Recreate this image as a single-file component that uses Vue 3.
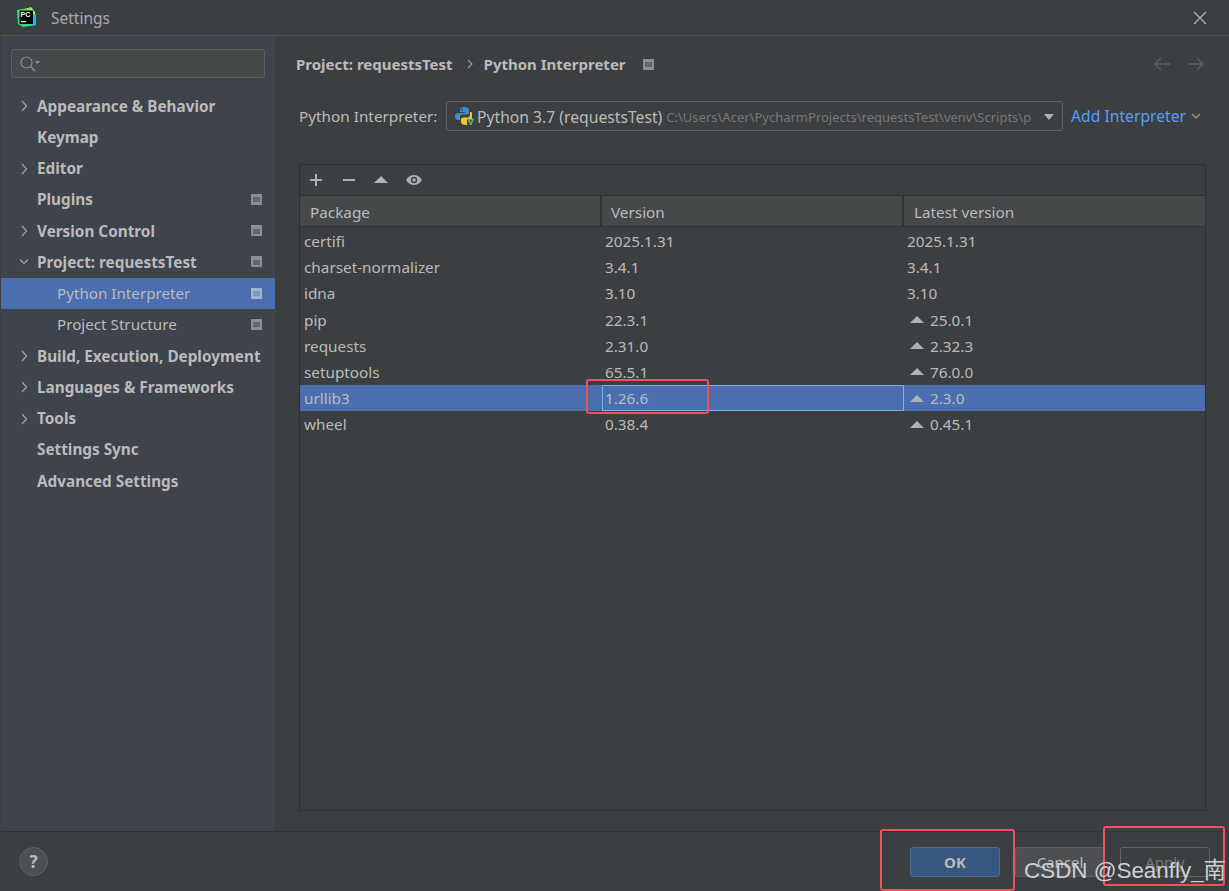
<template>
  <div class="dialog">
    <div class="titlebar">
      <svg class="logo" width="20" height="20" viewBox="0 0 20 20">
        <defs>
          <linearGradient id="pcEdge" x1="0" y1="1" x2="1" y2="0">
            <stop offset="0" stop-color="#21d789" />
            <stop offset="0.6" stop-color="#3bea62" />
            <stop offset="1" stop-color="#fcf84a" />
          </linearGradient>
        </defs>
        <path d="M1 3 12 1 15 0 19 5 20 18 7 20 2 17Z" fill="url(#pcEdge)" />
        <path d="M16 8 20 7 20 18 15 19Z" fill="#07c3f2" />
        <rect x="3.500" y="3.500" width="13.500" height="13.500" fill="#000" />
        <text x="4.500" y="9.800" class="logo-text">PC</text>
        <rect x="5" y="14" width="5" height="1.200" fill="#fff" />
      </svg>
      <span class="title">Settings</span>
      <svg class="close" width="14" height="14" viewBox="0 0 14 14">
        <path d="M1 1 13 13M13 1 1 13" stroke="#b4b4b4" stroke-width="1.2" fill="none" />
      </svg>
    </div>

    <div class="body">
      <div class="sidebar">
        <div class="search">
          <svg width="22" height="18" viewBox="0 0 22 18">
            <circle cx="7.500" cy="7.500" r="5.500" fill="none" stroke="#8f9295" stroke-width="1.2" />
            <path d="M11.500 11.500 16 16" stroke="#8f9295" stroke-width="1.4" />
            <path d="M16 6h5l-2.500 3Z" fill="#8f9295" />
          </svg>
        </div>
        <ul class="tree">
          <li
            v-for="item in tree"
            :key="item.label"
            class="tree-row"
            :class="{ selected: item.selected, child: item.child }"
          >
            <svg v-if="item.arrow" class="arrow" width="10" height="12" viewBox="0 0 10 12">
              <path
                :d="item.arrow === 'down' ? 'M1 3.5 5 7.5 9 3.5' : 'M3 1 7.5 6 3 11'"
                fill="none"
                stroke="#a0a3a5"
                stroke-width="1.3"
              />
            </svg>
            <span class="tree-label">{{ item.label }}</span>
            <span v-if="item.badge" class="badge"></span>
          </li>
        </ul>
      </div>

      <div class="content">
        <div class="crumbs">
          <span>Project: requestsTest</span>
          <svg width="8" height="10" viewBox="0 0 8 10">
            <path d="M2 1 6 5 2 9" fill="none" stroke="#a0a3a5" stroke-width="1.1" />
          </svg>
          <span>Python Interpreter</span>
          <span class="badge"></span>
          <div class="nav-arrows">
            <svg width="18" height="14" viewBox="0 0 18 14">
              <path d="M17 7H2M8 1 2 7l6 6" fill="none" stroke="#55585a" stroke-width="2" />
            </svg>
            <svg width="18" height="14" viewBox="0 0 18 14">
              <path d="M1 7h15M10 1l6 6-6 6" fill="none" stroke="#55585a" stroke-width="2" />
            </svg>
          </div>
        </div>

        <div class="interpreter">
          <span class="interp-label">Python Interpreter:</span>
          <div class="combo">
            <svg class="py" width="20" height="20" viewBox="0 0 20 20">
              <path d="M9 1C6 1 5 2 5 4v2h5v1H3C1 7 0 8.500 0 10.500S1 14 3 14h2v-3c0-1.500 1-2.500 3-2.500h4c1.500 0 2-1 2-2V4c0-2-2-3-5-3Z" fill="#3d8fc4" />
              <circle cx="7" cy="3.500" r="0.900" fill="#3c3f41" />
              <path d="M15 6v3c0 1.500-1 2.500-3 2.500H8c-1.500 0-2 1-2 2V16c0 2 2 3 5 3h1v-5.500h5V7c0-.6-.5-1-2-1Z" fill="#f0c52e" />
              <path d="M12.500 12.500h1.800l1.500 4.200 1.500-4.200h1.800L16.600 19h-1.700Z" fill="#62b543" />
            </svg>
            <span class="combo-name">Python 3.7 (requestsTest)</span>
            <span class="combo-path">C:\Users\Acer\PycharmProjects\requestsTest\venv\Scripts\p</span>
            <span class="combo-caret"></span>
          </div>
          <span class="add-link">Add Interpreter</span>
          <svg width="10" height="7" viewBox="0 0 10 7">
            <path d="M1 1 5 5 9 1" fill="none" stroke="#8f9295" stroke-width="1.5" />
          </svg>
        </div>

        <div class="table">
          <div class="toolbar">
            <svg width="14" height="14" viewBox="0 0 14 14">
              <path d="M7 1v12M1 7h12" stroke="#afb1b3" stroke-width="2" />
            </svg>
            <svg width="14" height="14" viewBox="0 0 14 14">
              <path d="M1 7h12" stroke="#afb1b3" stroke-width="2" />
            </svg>
            <svg width="14" height="14" viewBox="0 0 14 14">
              <path d="M7 3 14 10H0Z" fill="#afb1b3" />
            </svg>
            <svg class="eye" width="18" height="14" viewBox="0 0 18 14">
              <path d="M1 7c2-3.500 5-5 8-5s6 1.500 8 5c-2 3.500-5 5-8 5S3 10.500 1 7Z" fill="#afb1b3" />
              <circle cx="9" cy="7" r="3.200" fill="#3c3f41" />
              <circle cx="9" cy="7" r="1.700" fill="#afb1b3" />
            </svg>
          </div>
          <div class="thead">
            <span>Package</span>
            <span>Version</span>
            <span>Latest version</span>
          </div>
          <div
            v-for="pkg in packages"
            :key="pkg.name"
            class="trow"
            :class="{ selected: pkg.name === 'urllib3' }"
          >
            <span class="cell">{{ pkg.name }}</span>
            <span class="cell version">{{ pkg.version }}</span>
            <span class="cell latest">
              <i v-if="pkg.upgrade" class="up"></i>{{ pkg.latest }}
            </span>
          </div>
        </div>
      </div>
    </div>

    <div class="footer">
      <div class="help">?</div>
      <div class="buttons">
        <button class="btn primary">OK</button>
        <button class="btn cancel">Cancel</button>
        <button class="btn disabled">Apply</button>
      </div>
    </div>

    <!-- annotations drawn over the screenshot -->
    <div class="mark mark-version"></div>
    <div class="mark mark-ok"></div>
    <div class="mark mark-apply"></div>
    <div class="watermark">CSDN @Seanfly_南</div>
  </div>
</template>

<script setup>
const tree = [
  { label: "Appearance & Behavior", arrow: "right" },
  { label: "Keymap" },
  { label: "Editor", arrow: "right" },
  { label: "Plugins", badge: true },
  { label: "Version Control", arrow: "right", badge: true },
  { label: "Project: requestsTest", arrow: "down", badge: true },
  { label: "Python Interpreter", child: true, selected: true, badge: true },
  { label: "Project Structure", child: true, badge: true },
  { label: "Build, Execution, Deployment", arrow: "right" },
  { label: "Languages & Frameworks", arrow: "right" },
  { label: "Tools", arrow: "right" },
  { label: "Settings Sync" },
  { label: "Advanced Settings" },
];

const packages = [
  { name: "certifi", version: "2025.1.31", latest: "2025.1.31" },
  { name: "charset-normalizer", version: "3.4.1", latest: "3.4.1" },
  { name: "idna", version: "3.10", latest: "3.10" },
  { name: "pip", version: "22.3.1", latest: "25.0.1", upgrade: true },
  { name: "requests", version: "2.31.0", latest: "2.32.3", upgrade: true },
  { name: "setuptools", version: "65.5.1", latest: "76.0.0", upgrade: true },
  { name: "urllib3", version: "1.26.6", latest: "2.3.0", upgrade: true },
  { name: "wheel", version: "0.38.4", latest: "0.45.1", upgrade: true },
];
</script>

<style>
html,
body {
  margin: 0;
  background: #3c3f41;
}
</style>

<style scoped>
.dialog {
  position: relative;
  width: 1229px;
  height: 891px;
  overflow: hidden;
  display: flex;
  flex-direction: column;
  box-sizing: border-box;
  padding-left: 1px;
  background: #3c3f41;
  color: #bbbbbb;
  font-family: "Noto Sans", "Open Sans", sans-serif;
  font-size: 15.300px;
}

.titlebar {
  height: 35px;
  flex: none;
  display: flex;
  align-items: center;
  border-bottom: 1px solid #515151;
  padding-left: 15px;
}
.logo {
  margin-top: -1px;
}
.logo-text {
  font-family: "Liberation Sans", sans-serif;
  font-size: 7px;
  font-weight: 700;
  fill: #fff;
}
.title {
  margin-left: 15px;
  font-size: 15.500px;
  color: #a9abad;
}
.close {
  margin-left: auto;
  margin-right: 22px;
  margin-top: 1px;
}

.body {
  flex: 1;
  display: flex;
  min-height: 0;
}

.sidebar {
  width: 274px;
  flex: none;
  background: #3e434c;
  padding-top: 13px;
  box-sizing: border-box;
}
.search {
  margin: 0 10px;
  height: 29px;
  box-sizing: border-box;
  border: 1px solid #5e6060;
  border-radius: 3px;
  background: #45494a;
  display: flex;
  align-items: center;
  padding-left: 7px;
}
.tree {
  list-style: none;
  margin: 12px 0 0;
  padding: 0;
}
.tree-row {
  height: 31.250px;
  display: flex;
  align-items: center;
  position: relative;
  padding-left: 36px;
  font-weight: 700;
  font-size: 15.300px;
  white-space: nowrap;
}
.tree-row.child {
  padding-left: 56px;
  font-weight: 400;
  font-size: 15.200px;
}
.tree-row.selected {
  background: #4b6eaf;
}
.arrow {
  position: absolute;
  left: 18px;
  top: 10px;
}
.tree-row .badge {
  position: absolute;
  right: 13px;
  top: 10px;
}

.badge {
  display: inline-block;
  width: 11px;
  height: 11px;
  box-sizing: border-box;
  border: 1px solid #8d9093;
  border-top-width: 2px;
  background: linear-gradient(#63676a, #63676a) center / 7px 5px no-repeat #8d9093;
}
.selected .badge {
  border-color: #a5b3cc;
  background-color: #a5b3cc;
  background-image: linear-gradient(#7d94bf, #7d94bf);
}

.content {
  flex: 1;
  min-width: 0;
  padding: 16px 23px 20px 24px;
  display: flex;
  flex-direction: column;
  box-sizing: border-box;
}

.crumbs {
  height: 24px;
  margin-left: -3px;
  display: flex;
  align-items: center;
  font-weight: 700;
  font-size: 15px;
  color: #bbbbbb;
}
.crumbs > svg {
  margin: 0 10px 0 13px;
}
.crumbs .badge {
  margin-left: 17px;
}
.nav-arrows {
  margin-left: auto;
  margin-right: 1px;
  display: flex;
  gap: 16px;
}

.interpreter {
  margin-top: 25px;
  height: 30px;
  display: flex;
  align-items: center;
}
.interp-label {
  width: 147px;
  flex: none;
  font-size: 15.300px;
  margin-top: -1px;
}
.combo {
  position: relative;
  width: 617px;
  height: 30px;
  flex: none;
  box-sizing: border-box;
  border: 1px solid #646464;
  border-radius: 3px;
  display: flex;
  align-items: center;
  padding: 0 29px 0 8px;
  overflow: hidden;
  white-space: nowrap;
}
.py {
  flex: none;
  margin-right: 2px;
}
.combo-name {
  flex: none;
  font-size: 15.700px;
  margin-top: 1px;
}
.combo-path {
  margin-left: 4px;
  margin-top: 2px;
  font-size: 13px;
  color: #787878;
  overflow: hidden;
}
.combo-caret {
  position: absolute;
  right: 8px;
  top: 12px;
  border-left: 5.500px solid transparent;
  border-right: 5.500px solid transparent;
  border-top: 6px solid #afb1b3;
}
.add-link {
  margin-left: 8px;
  margin-right: 5px;
  margin-top: -1px;
  color: #589df6;
  font-size: 15.700px;
}

.table {
  margin-top: 33px;
  flex: 1;
  border: 1px solid #323232;
  display: flex;
  flex-direction: column;
  width: 907px;
  box-sizing: border-box;
}
.toolbar {
  height: 30px;
  flex: none;
  display: flex;
  align-items: center;
  gap: 18.500px;
  padding-left: 9px;
  border-bottom: 1px solid #323232;
}
.eye {
  margin-left: -2px;
}
.thead {
  height: 30px;
  flex: none;
  display: grid;
  grid-template-columns: 302px 302px 1fr;
  background: #45494a;
  border-bottom: 1px solid #323232;
  margin-bottom: 0.900px;
  align-items: center;
}
.thead span {
  height: 100%;
  display: flex;
  align-items: center;
  padding: 2px 0 0 10px;
  border-right: 2px solid #323232;
  box-sizing: border-box;
}
.thead span:nth-child(2) {
  padding-left: 9px;
}
.thead span:last-child {
  border-right: 0;
}
.trow {
  height: 26.200px;
  display: grid;
  grid-template-columns: 302px 302px 1fr;
  align-items: center;
}
.cell {
  height: 100%;
  display: flex;
  align-items: center;
  padding-left: 4px;
  box-sizing: border-box;
}
.version,
.latest {
  padding-left: 3px;
}
.trow.selected {
  background: #4b6eaf;
}
.trow.selected .version {
  border: 1px solid #75b6ed;
  padding-left: 2px;
  color: #b4bccb;
}
.up {
  width: 0;
  height: 0;
  margin: 0 6px 0 3px;
  border-left: 7px solid transparent;
  border-right: 7px solid transparent;
  border-bottom: 7px solid #afb1b3;
}

.footer {
  height: 59px;
  flex: none;
  border-top: 1px solid #323232;
  display: flex;
  align-items: center;
  padding: 0 19px 0 18px;
}
.help {
  width: 29px;
  height: 29px;
  box-sizing: border-box;
  border: 1px solid #5e6060;
  border-radius: 50%;
  background: #4c5052;
  display: flex;
  align-items: center;
  justify-content: center;
  font-weight: 700;
  font-size: 17px;
  color: #bbbbbb;
}
.buttons {
  margin-left: auto;
  display: flex;
  gap: 15px;
}
.btn {
  width: 90px;
  height: 30px;
  box-sizing: border-box;
  border-radius: 3px;
  font-family: inherit;
  font-size: 15px;
  color: #bbbbbb;
  padding: 0;
}
.primary {
  background: #365880;
  border: 1px solid #4c708c;
  font-weight: 700;
}
.cancel {
  background: #4c5052;
  border: 1px solid #5e6060;
}
.disabled {
  background: #3c3f41;
  border: 1px solid #646464;
  color: #777777;
}

.mark {
  position: absolute;
  box-sizing: border-box;
  border: 2px solid #f1505f;
  border-radius: 3px;
}
.mark-version {
  left: 586px;
  top: 379px;
  width: 123px;
  height: 35px;
}
.mark-ok {
  left: 880px;
  top: 829px;
  width: 135px;
  height: 62px;
}
.mark-apply {
  left: 1103px;
  top: 826px;
  width: 122px;
  height: 60px;
}
.watermark {
  position: absolute;
  right: 3px;
  top: 855px;
  font-family: "Liberation Sans", "Noto Sans CJK SC", sans-serif;
  font-size: 22.400px;
  line-height: 32px;
  color: #cfd0d1;
  white-space: nowrap;
}
</style>
